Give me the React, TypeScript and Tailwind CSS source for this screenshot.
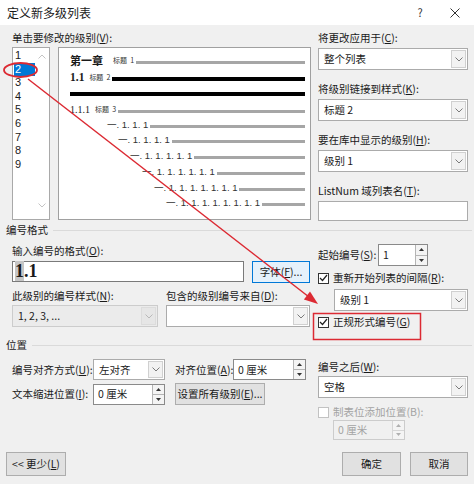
import type { ReactNode } from 'react';

// 定义新多级列表 — Word 对话框截图复刻

const K = ({ k }: { k: string }) => (
  <>
    (<u className="underline-offset-1">{k}</u>)
  </>
);

const Label = ({ children, className = '', dim = false }: { children: ReactNode; className?: string; dim?: boolean }) => (
  <div className={`h-[14px] leading-[14px] text-[10.5px] whitespace-nowrap ${dim ? 'text-[#a3a3a3]' : 'text-[#1a1a1a]'} ${className}`}>
    {children}
  </div>
);

const Chevron = ({ color = '#7a7a7a' }: { color?: string }) => (
  <svg width="8" height="5" viewBox="0 0 8 5">
    <polyline points="0.5,0.5 4,4 7.5,0.5" fill="none" stroke={color} strokeWidth="1" />
  </svg>
);

const ChevronUp = ({ color = '#c4c4c4' }: { color?: string }) => (
  <svg width="8" height="5" viewBox="0 0 8 5">
    <polyline points="0.5,4.5 4,1 7.5,4.5" fill="none" stroke={color} strokeWidth="1" />
  </svg>
);

const Select = ({
  value, className = '', h = 'h-[22px]', disabled = false,
}: { value?: string; className?: string; h?: string; disabled?: boolean }) => (
  <div className={`flex ${h} border ${disabled ? 'border-[#cccccc] bg-[#ebebeb]' : 'border-[#ababab] bg-white'} ${className}`}>
    <div className="flex-1 flex items-center pl-[5px] text-[10.5px] whitespace-nowrap">{value}</div>
    <div className={`w-[15px] m-px flex items-center justify-center border ${disabled ? 'border-[#dcdcdc] bg-[#e6e6e6]' : 'border-[#d0d0d0] bg-[#f2f2f2]'}`}>
      <Chevron color={disabled ? '#b8b8b8' : '#7a7a7a'} />
    </div>
  </div>
);

const Tri = ({ up, color }: { up: boolean; color: string }) => (
  <svg width="5" height="3" viewBox="0 0 5 3">
    <polygon points={up ? '0,3 2.5,0 5,3' : '0,0 2.5,3 5,0'} fill={color} />
  </svg>
);

const Spinner = ({
  value, className = '', h = 'h-[21px]', disabled = false,
}: { value: string; className?: string; h?: string; disabled?: boolean }) => (
  <div className={`flex ${h} border ${disabled ? 'border-[#cccccc] bg-[#f0f0f0] text-[#a3a3a3]' : 'border-[#8a8a8a] bg-white'} ${className}`}>
    <div className="flex-1 flex items-center pl-[4px] text-[10.5px] whitespace-nowrap">{value}</div>
    <div className={`w-[12px] flex flex-col border-l ${disabled ? 'border-[#d6d6d6]' : 'border-[#b5b5b5]'} bg-[#f4f4f4]`}>
      <div className={`flex-1 flex items-center justify-center border-b ${disabled ? 'border-[#d6d6d6]' : 'border-[#b5b5b5]'}`}>
        <Tri up color={disabled ? '#b0b0b0' : '#333333'} />
      </div>
      <div className="flex-1 flex items-center justify-center">
        <Tri up={false} color={disabled ? '#b0b0b0' : '#333333'} />
      </div>
    </div>
  </div>
);

const Checkbox = ({ checked = false, disabled = false }: { checked?: boolean; disabled?: boolean }) => (
  <span className={`w-[11px] h-[11px] flex items-center justify-center border bg-white ${disabled ? 'border-[#c2c2c2]' : 'border-[#333333]'}`}>
    {checked && (
      <svg width="9" height="8" viewBox="0 0 9 8">
        <polyline points="1,4 3.5,6.5 8,1" fill="none" stroke="#222" strokeWidth="1.2" />
      </svg>
    )}
  </span>
);

const Button = ({ children, className = '' }: { children: ReactNode; className?: string }) => (
  <div className={`flex items-center justify-center border border-[#adadad] bg-[#e1e1e1] text-[10.5px] whitespace-nowrap ${className}`}>
    {children}
  </div>
);

const GroupHeader = ({ title, className = '' }: { title: string; className?: string }) => (
  <div className={`h-[14px] flex items-center pl-[6px] pr-[2px] ${className}`}>
    <span className="text-[10.5px] leading-[14px]">{title}</span>
    <div className="ml-[5px] flex-1 h-px bg-[#dadada]" />
  </div>
);

const Bar = ({ className = '' }: { className?: string }) => (
  <span className={`flex-1 h-[3px] bg-[#a6a6a6] ${className}`} />
);

const subRows = [
  { pl: 'pl-[48px]', h: 'h-[15px]', n: 3 },
  { pl: 'pl-[59px]', h: 'h-[16px]', n: 4 },
  { pl: 'pl-[71px]', h: 'h-[16px]', n: 5 },
  { pl: 'pl-[83px]', h: 'h-[16px]', n: 6 },
  { pl: 'pl-[95px]', h: 'h-[15px]', n: 7 },
  { pl: 'pl-[107px]', h: 'h-[16px]', n: 8 },
];

export default function App() {
  return (
    <div className="relative w-[474px] h-[484px] overflow-hidden bg-[#f0f0f0] text-[#1a1a1a] font-['Noto_Sans_CJK_SC','Liberation_Sans',sans-serif]">
      {/* 标题栏 */}
      <div className="h-[25px] bg-white flex items-center pl-[7px]">
        <span className="text-[12px]">定义新多级列表</span>
        <span className="ml-auto w-[20px] text-center text-[11px] text-[#333]">?</span>
        <span className="ml-[15px] mr-[9px] w-[20px] flex justify-center">
          <svg width="10" height="10" viewBox="0 0 10 10">
            <path d="M0.5 0.5 L9.5 9.5 M9.5 0.5 L0.5 9.5" stroke="#333" strokeWidth="1" />
          </svg>
        </span>
      </div>

      {/* 上部：级别列表 + 预览 */}
      <div className="mt-[6px] h-[190px] flex gap-[7px] pl-[12px]">
        <div className="w-[299px]">
          <Label>单击要修改的级别<K k="V" />:</Label>
          <div className="mt-[2px] flex gap-[8px]">
            <div className="w-[38px] h-[173px] border border-[#a9a9a9] bg-white flex">
              <div className="w-[21px] ml-px pt-px font-['Liberation_Sans',sans-serif]">
                {[1, 2, 3, 4, 5, 6, 7, 8, 9].map((n) => (
                  <div key={n}
                    className={`h-[13.6px] leading-[13px] text-[11px] pl-[1px] ${n === 2 ? 'bg-[#0078d7] text-white' : ''}`}>
                    {n}
                  </div>
                ))}
              </div>
              <div className="w-[14px] flex flex-col items-center justify-between pt-[6px] pb-[11px]">
                <ChevronUp />
                <Chevron color="#c4c4c4" />
              </div>
            </div>

            <div className="w-[253px] h-[173px] border border-[#a0a0a0] bg-white pt-[4px] pr-[5px]">
              <div className="h-[17px] flex items-center pl-[11px]">
                <span className="text-[11px] font-bold leading-none">第一章</span>
                <span className="ml-[10px] text-[7px] leading-none text-[#333]">标题&nbsp;&nbsp;1</span>
                <Bar className="ml-[2px] mt-[4px]" />
              </div>
              <div className="h-[17px] flex items-center pl-[11px]">
                <span className="text-[11.5px] font-bold leading-none font-['Liberation_Serif',serif]">1.1</span>
                <span className="ml-[5px] text-[7px] leading-none text-[#333]">标题&nbsp;&nbsp;2</span>
                <span className="ml-[2px] mt-[2px] flex-1 h-[4px] bg-black" />
              </div>
              <div className="h-[16px] flex items-center pl-[11px]">
                <span className="flex-1 h-[4px] bg-black" />
              </div>
              <div className="h-[15px] flex items-center pl-[11px]">
                <span className="text-[10px] leading-none font-['Liberation_Serif',serif]">1.1.1</span>
                <span className="ml-[5px] text-[7px] leading-none text-[#333]">标题&nbsp;&nbsp;3</span>
                <Bar className="ml-[2px] mt-[3px]" />
              </div>
              {subRows.map((r) => (
                <div key={r.n} className={`${r.h} ${r.pl} flex items-center`}>
                  <span className="text-[9.5px] leading-none text-[#333] whitespace-nowrap font-['Liberation_Sans','Noto_Sans_CJK_SC',sans-serif]">
                    一{'. 1'.repeat(r.n)}
                  </span>
                  <Bar className="ml-[2px] mt-[3px]" />
                </div>
              ))}
            </div>
          </div>
        </div>

        <div className="w-[150px]">
          <Label>将更改应用于<K k="C" />:</Label>
          <Select className="mt-[3px] w-[150px]" value="整个列表" />
          <Label className="mt-[12px]">将级别链接到样式<K k="K" />:</Label>
          <Select className="mt-[3px] w-[150px]" value="标题 2" />
          <Label className="mt-[12px]">要在库中显示的级别<K k="H" />:</Label>
          <Select className="mt-[3px] w-[150px]" value="级别 1" />
          <Label className="mt-[12px]">ListNum 域列表名<K k="T" />:</Label>
          <div className="mt-[3px] w-[150px] h-[20px] border border-[#ababab] bg-white" />
        </div>
      </div>

      <GroupHeader title="编号格式" className="mt-[2px]" />

      {/* 编号格式 */}
      <div className="h-[101px] flex gap-[7px] pl-[12px]">
        <div className="w-[299px]">
          <Label className="mt-[7px]">输入编号的格式<K k="O" />:</Label>
          <div className="mt-[3px] flex gap-[8px]">
            <div className="w-[232px] h-[21px] border border-[#7a7a7a] bg-white flex items-center pl-[2px]">
              <span className="text-[18px] leading-[17px] font-bold font-['Liberation_Serif',serif]">
                <span className="bg-[#c6c6c6]">1</span>.1
              </span>
            </div>
            <div className="w-[58px] h-[22px] flex items-center justify-center border border-[#0078d7] bg-[#e5f1fb] text-[10.5px]">
              字体<K k="F" />...
            </div>
          </div>
          <div className="mt-[6px] flex">
            <Label className="w-[154px]">此级别的编号样式<K k="N" />:</Label>
            <Label>包含的级别编号来自<K k="D" />:</Label>
          </div>
          <div className="mt-[2px] flex gap-[8px]">
            <Select className="w-[146px]" value="1, 2, 3, ..." disabled />
            <Select className="w-[144px]" />
          </div>
        </div>

        <div className="w-[150px]">
          <div className="mt-[7px] h-[22px] flex items-center">
            <Label className="w-[60px]">起始编号<K k="S" />:</Label>
            <Spinner className="w-[50px]" h="h-[22px]" value="1" />
          </div>
          <div className="mt-[5px] h-[14px] flex items-center">
            <Checkbox checked />
            <Label className="ml-[4px]">重新开始列表的间隔<K k="R" />:</Label>
          </div>
          <Select className="mt-[4px] ml-[16px] w-[134px]" value="级别 1" />
          <div className="mt-[4px] h-[14px] flex items-center">
            <Checkbox checked />
            <Label className="ml-[4px]">正规形式编号<K k="G" /></Label>
          </div>
        </div>
      </div>

      <GroupHeader title="位置" />

      {/* 位置 */}
      <div className="h-[100px] flex gap-[7px] pl-[12px]">
        <div className="w-[299px]">
          <div className="mt-[7px] h-[21px] flex items-center">
            <Label className="w-[81px]">编号对齐方式<K k="U" />:</Label>
            <Select className="w-[72px]" h="h-[21px]" value="左对齐" />
            <Label className="ml-[10px] w-[58px]">对齐位置<K k="A" />:</Label>
            <Spinner className="w-[73px]" value="0 厘米" />
          </div>
          <div className="mt-[3px] h-[22px] flex items-center">
            <Label className="w-[81px]">文本缩进位置<K k="I" />:</Label>
            <Spinner className="w-[72px]" value="0 厘米" />
            <Button className="ml-[10px] w-[90px] h-[22px]">设置所有级别<K k="E" />...</Button>
          </div>
        </div>

        <div className="w-[150px]">
          <Label className="mt-[8px]">编号之后<K k="W" />:</Label>
          <Select className="mt-[2px] w-[150px]" value="空格" />
          <div className="mt-[7px] h-[14px] flex items-center">
            <Checkbox disabled />
            <Label className="ml-[4px]" dim>制表位添加位置(B):</Label>
          </div>
          <Spinner className="mt-[1px] ml-[15px] w-[72px]" h="h-[20px]" value="0 厘米" disabled />
        </div>
      </div>

      {/* 底部按钮 */}
      <div className="h-[24px] flex px-[6px]">
        <Button className="w-[60px] h-[24px]">&lt;&lt; 更少<K k="L" /></Button>
        <div className="ml-auto flex gap-[9px]">
          <Button className="w-[59px] h-[24px]">确定</Button>
          <Button className="w-[58px] h-[24px]">取消</Button>
        </div>
      </div>

      {/* 红色标注 */}
      <svg className="absolute inset-0 pointer-events-none" width="474" height="484" viewBox="0 0 474 484">
        <ellipse cx="20.5" cy="70" rx="16.5" ry="7" fill="none" stroke="#dc2a33" strokeWidth="1.8" />
        <line x1="28" y1="79" x2="309" y2="297" stroke="#dc2a33" strokeWidth="1.5" />
        <polygon points="318,304 303.9,299.4 310,291.5" fill="#dc2a33" />
        <rect x="313.5" y="313.5" width="107" height="26" fill="none" stroke="#dc2a33" strokeWidth="1.5" />
      </svg>
    </div>
  );
}
